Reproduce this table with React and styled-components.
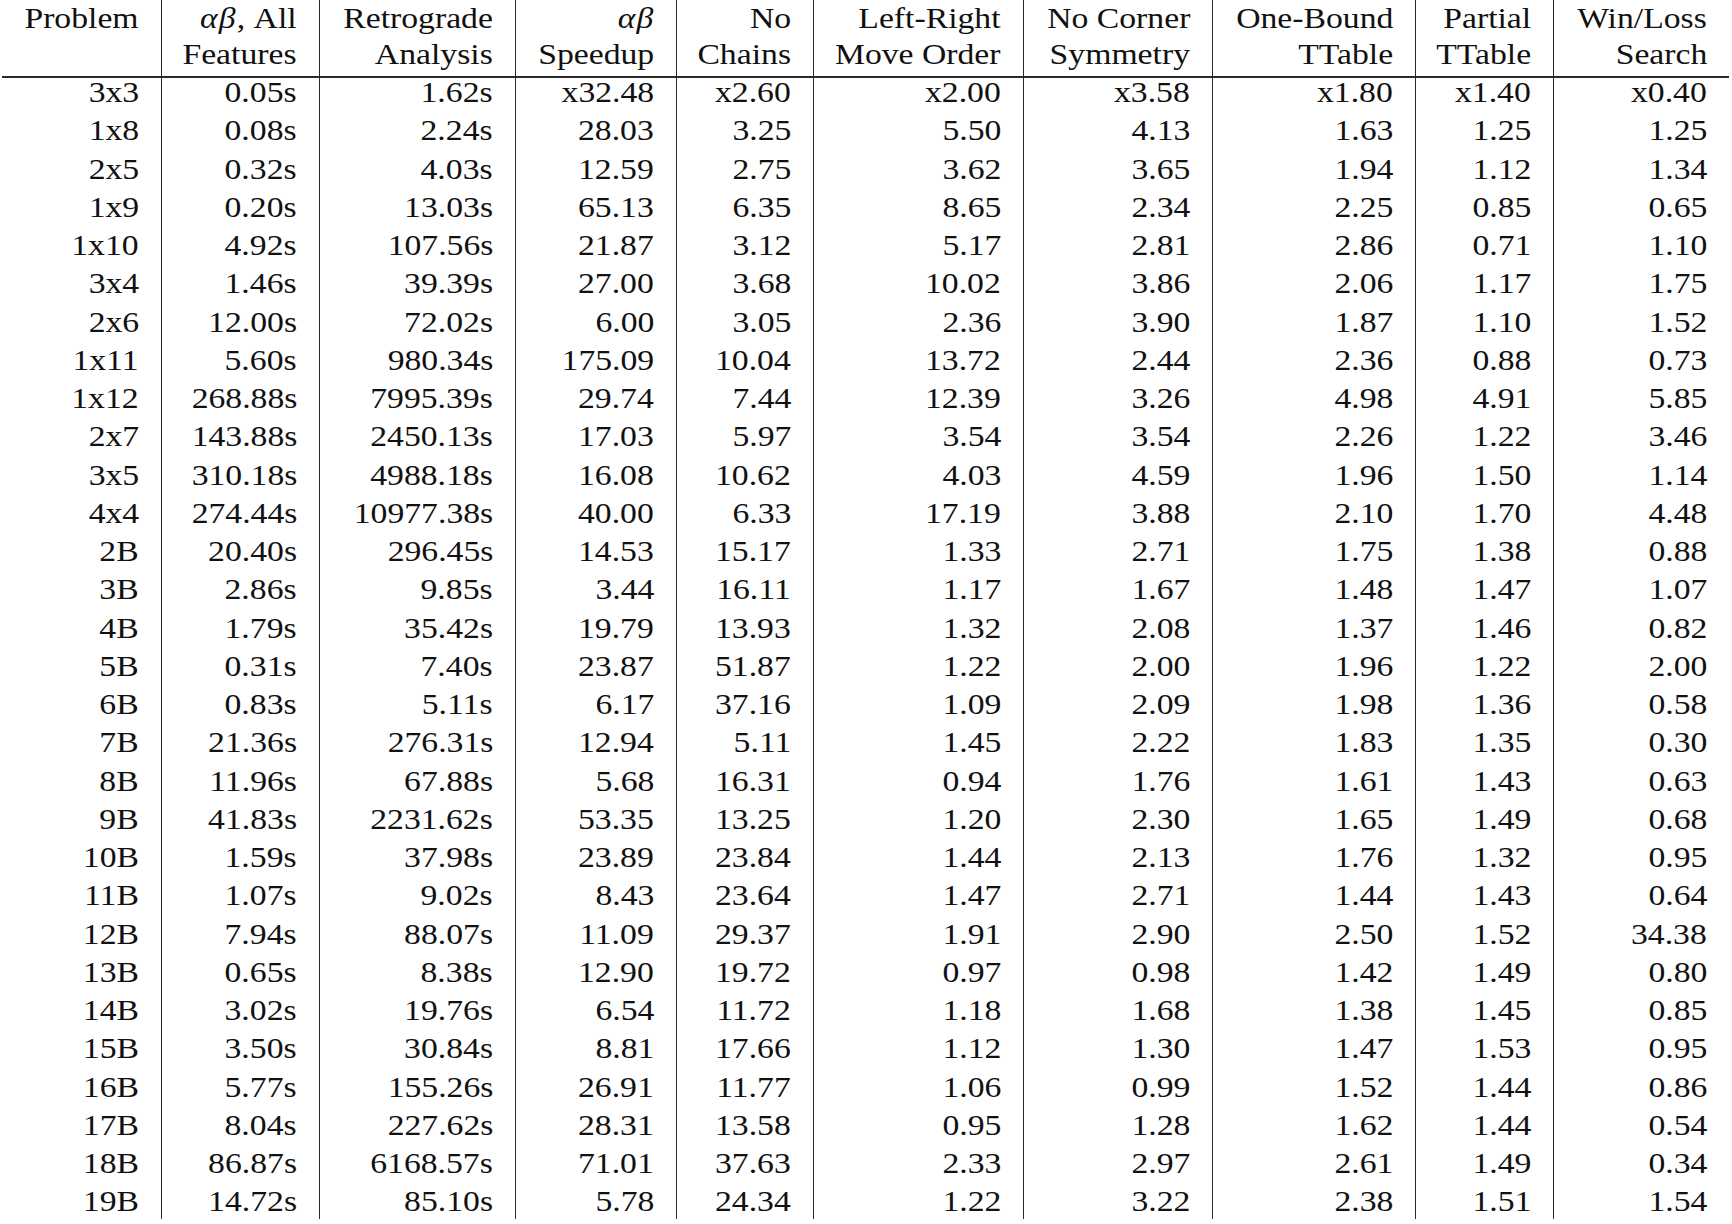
import React from "react";
import styled, { createGlobalStyle, css } from "styled-components";

const Global = createGlobalStyle`
  html, body { margin: 0; padding: 0; background: #fff; }
  body { font-family: "Liberation Serif", "Times New Roman", serif; color: #111; }
`;

const columns = css`
  display: grid;
  grid-template-columns: 159px 158px 196px 161px 137px 210px 189px 203px 138px 176px;
`;

const Table = styled.div`
  padding-left: 2px;
  width: 1727px;
  font-size: 28.8px;
`;

const HeaderRow = styled.div`
  ${columns};
  border-bottom: 2px solid #2a2a2a;
`;

const HeadCell = styled.div`
  text-align: right;
  padding: 0 22px 4px 0;
  line-height: 36px;
  & + & { border-left: 1px solid #2a2a2a; }
`;

const Row = styled.div`
  ${columns};
`;

const Cell = styled.div`
  text-align: right;
  padding: 0 22px 0 0;
  line-height: 28px;
  height: ${(p) => (p.$last ? "31.5px" : "38.25px")};
  box-sizing: border-box;
  & + & { border-left: 1px solid #2a2a2a; }
`;

const Txt = styled.span`
  display: inline-block;
  white-space: pre;
  transform: scaleX(1.17);
  transform-origin: 100% 50%;
`;

const Line = styled.div`
  height: 36px;
`;

const Greek = styled.i`
  font-style: italic;
  letter-spacing: 1px;
`;

const AB = () => <Greek>αβ</Greek>;

const headers = [
  ["Problem", ""],
  [<><AB />, All</>, "Features"],
  ["Retrograde", "Analysis"],
  [<AB />, "Speedup"],
  ["No", "Chains"],
  ["Left-Right", "Move Order"],
  ["No Corner", "Symmetry"],
  ["One-Bound", "TTable"],
  ["Partial", "TTable"],
  ["Win/Loss", "Search"],
];

const rows = [
  ["3x3", "0.05s", "1.62s", "x32.48", "x2.60", "x2.00", "x3.58", "x1.80", "x1.40", "x0.40"],
  ["1x8", "0.08s", "2.24s", "28.03", "3.25", "5.50", "4.13", "1.63", "1.25", "1.25"],
  ["2x5", "0.32s", "4.03s", "12.59", "2.75", "3.62", "3.65", "1.94", "1.12", "1.34"],
  ["1x9", "0.20s", "13.03s", "65.13", "6.35", "8.65", "2.34", "2.25", "0.85", "0.65"],
  ["1x10", "4.92s", "107.56s", "21.87", "3.12", "5.17", "2.81", "2.86", "0.71", "1.10"],
  ["3x4", "1.46s", "39.39s", "27.00", "3.68", "10.02", "3.86", "2.06", "1.17", "1.75"],
  ["2x6", "12.00s", "72.02s", "6.00", "3.05", "2.36", "3.90", "1.87", "1.10", "1.52"],
  ["1x11", "5.60s", "980.34s", "175.09", "10.04", "13.72", "2.44", "2.36", "0.88", "0.73"],
  ["1x12", "268.88s", "7995.39s", "29.74", "7.44", "12.39", "3.26", "4.98", "4.91", "5.85"],
  ["2x7", "143.88s", "2450.13s", "17.03", "5.97", "3.54", "3.54", "2.26", "1.22", "3.46"],
  ["3x5", "310.18s", "4988.18s", "16.08", "10.62", "4.03", "4.59", "1.96", "1.50", "1.14"],
  ["4x4", "274.44s", "10977.38s", "40.00", "6.33", "17.19", "3.88", "2.10", "1.70", "4.48"],
  ["2B", "20.40s", "296.45s", "14.53", "15.17", "1.33", "2.71", "1.75", "1.38", "0.88"],
  ["3B", "2.86s", "9.85s", "3.44", "16.11", "1.17", "1.67", "1.48", "1.47", "1.07"],
  ["4B", "1.79s", "35.42s", "19.79", "13.93", "1.32", "2.08", "1.37", "1.46", "0.82"],
  ["5B", "0.31s", "7.40s", "23.87", "51.87", "1.22", "2.00", "1.96", "1.22", "2.00"],
  ["6B", "0.83s", "5.11s", "6.17", "37.16", "1.09", "2.09", "1.98", "1.36", "0.58"],
  ["7B", "21.36s", "276.31s", "12.94", "5.11", "1.45", "2.22", "1.83", "1.35", "0.30"],
  ["8B", "11.96s", "67.88s", "5.68", "16.31", "0.94", "1.76", "1.61", "1.43", "0.63"],
  ["9B", "41.83s", "2231.62s", "53.35", "13.25", "1.20", "2.30", "1.65", "1.49", "0.68"],
  ["10B", "1.59s", "37.98s", "23.89", "23.84", "1.44", "2.13", "1.76", "1.32", "0.95"],
  ["11B", "1.07s", "9.02s", "8.43", "23.64", "1.47", "2.71", "1.44", "1.43", "0.64"],
  ["12B", "7.94s", "88.07s", "11.09", "29.37", "1.91", "2.90", "2.50", "1.52", "34.38"],
  ["13B", "0.65s", "8.38s", "12.90", "19.72", "0.97", "0.98", "1.42", "1.49", "0.80"],
  ["14B", "3.02s", "19.76s", "6.54", "11.72", "1.18", "1.68", "1.38", "1.45", "0.85"],
  ["15B", "3.50s", "30.84s", "8.81", "17.66", "1.12", "1.30", "1.47", "1.53", "0.95"],
  ["16B", "5.77s", "155.26s", "26.91", "11.77", "1.06", "0.99", "1.52", "1.44", "0.86"],
  ["17B", "8.04s", "227.62s", "28.31", "13.58", "0.95", "1.28", "1.62", "1.44", "0.54"],
  ["18B", "86.87s", "6168.57s", "71.01", "37.63", "2.33", "2.97", "2.61", "1.49", "0.34"],
  ["19B", "14.72s", "85.10s", "5.78", "24.34", "1.22", "3.22", "2.38", "1.51", "1.54"],
];

export default function App() {
  return (
    <>
      <Global />
      <Table>
        <HeaderRow>
          {headers.map((h, i) => (
            <HeadCell key={i}>
              <Line><Txt>{h[0]}</Txt></Line>
              <Line><Txt>{h[1]}</Txt></Line>
            </HeadCell>
          ))}
        </HeaderRow>
        {rows.map((r, ri) => (
          <Row key={ri}>
            {r.map((v, ci) => (
              <Cell key={ci} $last={ri === rows.length - 1}>
                <Txt>{v}</Txt>
              </Cell>
            ))}
          </Row>
        ))}
      </Table>
    </>
  );
}
